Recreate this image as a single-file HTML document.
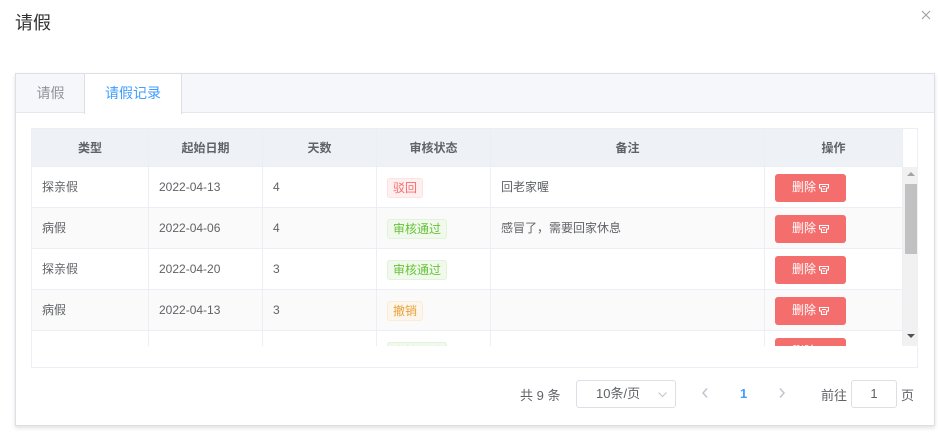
<!DOCTYPE html>
<html><head><meta charset="utf-8"><style>
*{box-sizing:border-box;margin:0;padding:0}
body{width:938px;height:434px;background:#fff;font-family:"Liberation Sans","Noto Sans CJK SC",sans-serif;color:#606266;position:relative;overflow:hidden;font-size:12px}
.abs{position:absolute}
.title{left:15px;top:9px;font-size:18px;color:#303133}
.card{left:15px;top:73px;width:920px;height:353px;border:1px solid #dcdfe6;box-shadow:0 2px 4px rgba(0,0,0,.12)}
.tabbar{left:0;top:0;width:918px;height:39px;background:#f5f7fa;border-bottom:1px solid #e4e7ed}
.tab{top:0;height:39px;line-height:39px;text-align:center;font-size:14px;color:#909399}
.t{left:15px;top:54px;width:887px;height:240px;border:1px solid #ebeef5}
.cell{position:absolute;height:41px;line-height:41px;padding-left:10px;border-right:1px solid #ebeef5;border-bottom:1px solid #ebeef5;white-space:nowrap;overflow:hidden}
.hd{background:#eef1f6;font-weight:bold;text-align:center;padding:0;height:38px;line-height:38px;color:#606266}
.tag{display:inline-block;height:20px;line-height:18px;padding:0 5px;border:1px solid;border-radius:3px;font-size:12px;vertical-align:middle}
.r{color:#f56c6c;background:#fef0f0;border-color:#fde2e2}
.g{color:#67c23a;background:#f0f9eb;border-color:#e1f3d8}
.o{color:#e6a23c;background:#fdf6ec;border-color:#faecd8}
.btn{display:inline-flex;align-items:center;justify-content:center;gap:3px;width:71px;height:28px;background:#f46e6e;color:#fff;border-radius:3px;vertical-align:middle}
</style></head><body>
<div class="abs title">请假</div>
<svg class="abs" style="left:921px;top:10px" width="10" height="10"><path d="M1 1L9 9M9 1L1 9" stroke="#a0a3a8" stroke-width="1.2"/></svg>
<div class="abs card">
 <div class="abs tabbar"></div>
 <div class="abs tab" style="left:0;width:69px">请假</div>
 <div class="abs tab" style="left:68px;width:98px;height:40px;background:#fff;border-left:1px solid #dcdfe6;border-right:1px solid #dcdfe6;color:#409eff">请假记录</div>
 <div class="abs t">
  <div style="position:absolute;left:0;top:0;width:886px;height:217px;overflow:hidden">
   <div class="cell hd" style="left:0;top:0;width:117px">类型</div>
   <div class="cell hd" style="left:117px;top:0;width:114px">起始日期</div>
   <div class="cell hd" style="left:231px;top:0;width:114px">天数</div>
   <div class="cell hd" style="left:345px;top:0;width:114px">审核状态</div>
   <div class="cell hd" style="left:459px;top:0;width:274px">备注</div>
   <div class="cell hd" style="left:733px;top:0;width:138px">操作</div>
   <div style="position:absolute;left:871px;top:38px;width:16px;height:179px;background:#f1f1f1"></div>
   <div style="position:absolute;left:873px;top:55px;width:12px;height:70px;background:#c1c1c1"></div>
   <div style="position:absolute;left:875px;top:43px;border:4px solid transparent;border-bottom:4px solid #a3a3a3;border-top:0"></div>
   <div style="position:absolute;left:875px;top:205px;border:4px solid transparent;border-top:4px solid #505050;border-bottom:0"></div>
   <div id="rows"></div>
  </div>
 </div>
 <div class="abs" style="left:504px;top:311px;font-size:13px">共 9 条</div>
 <div class="abs" style="left:560px;top:306px;width:100px;height:28px;border:1px solid #dcdfe6;border-radius:3px;font-size:13px;line-height:26px;padding-left:19px">10条/页<svg style="position:absolute;right:8px;top:11px" width="9" height="6"><path d="M0.5 0.5L4.5 4.5L8.5 0.5" fill="none" stroke="#c0c4cc"/></svg></div>
 <svg class="abs" style="left:686px;top:314px" width="6" height="10"><path d="M5 0.5L1 5L5 9.5" fill="none" stroke="#c0c4cc" stroke-width="1.5"/></svg>
 <div class="abs" style="left:724px;top:312px;color:#409eff;font-weight:bold;font-size:13px">1</div>
 <svg class="abs" style="left:763px;top:314px" width="6" height="10"><path d="M1 0.5L5 5L1 9.5" fill="none" stroke="#c0c4cc" stroke-width="1.5"/></svg>
 <div class="abs" style="left:805px;top:311px;font-size:13px">前往</div>
 <div class="abs" style="left:835px;top:306px;width:46px;height:28px;border:1px solid #dcdfe6;border-radius:3px;text-align:center;line-height:26px;font-size:13px">1</div>
 <div class="abs" style="left:885px;top:311px;font-size:13px">页</div>
</div>
<script>
var d=[["探亲假","2022-04-13","4",'<span class="tag r">驳回</span>',"回老家喔"],
["病假","2022-04-06","4",'<span class="tag g">审核通过</span>',"感冒了，需要回家休息"],
["探亲假","2022-04-20","3",'<span class="tag g">审核通过</span>',""],
["病假","2022-04-13","3",'<span class="tag o">撤销</span>',""],
["","","",'<span class="tag g">审核通过</span>',""]];
var L=[0,117,231,345,459,733],W=[117,114,114,114,274,138],h="";
var ic='<svg width="10" height="10"><path d="M0.5 1.5H9.5V5H7.5V8.5H2.5V5H0.5ZM3 3.5H7M5 5V7" fill="none" stroke="#fff" stroke-width="1.1"/></svg>';
d.forEach(function(r,i){var top=38+i*41,bg=i%2?"#fafafa":"#fff";
for(var c=0;c<5;c++)h+='<div class="cell" style="left:'+L[c]+'px;top:'+top+'px;width:'+W[c]+'px;background:'+bg+'">'+r[c]+'</div>';
h+='<div class="cell" style="left:733px;top:'+top+'px;width:138px;background:'+bg+'"><span class="btn">删除 '+ic+'</span></div>';});
document.getElementById("rows").innerHTML=h;
</script>
</body></html>
